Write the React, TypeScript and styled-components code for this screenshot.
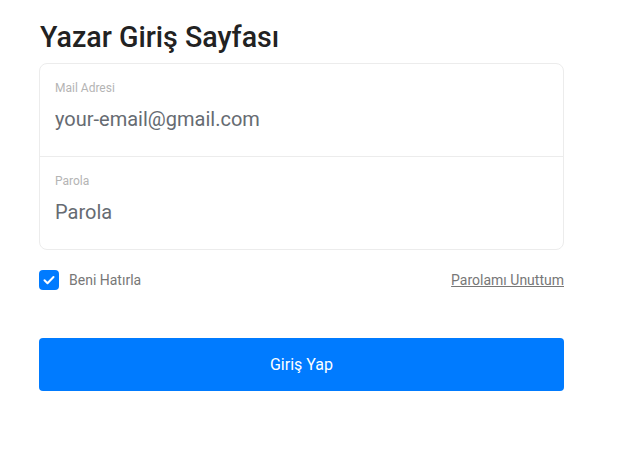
import { useState } from 'react';
import styled, { createGlobalStyle } from 'styled-components';

const GlobalStyle = createGlobalStyle`
  body {
    margin: 0;
    background: #fff;
    font-family: Roboto, "Liberation Sans", sans-serif;
  }
`;

const Page = styled.div`
  width: 525px;
  padding: 20px 0 0 39px;
`;

const Title = styled.h1`
  margin: 0 0 8px 1px;
  font-size: 28.6px;
  line-height: 35px;
  font-weight: 500;
  color: #222;
`;

const Card = styled.div`
  border: 1px solid #ececec;
  border-radius: 8px;
  overflow: hidden;
`;

const Field = styled.label<{ $last?: boolean }>`
  display: block;
  height: ${p => (p.$last ? 92 : 93)}px;
  padding: 17px 15px 0;
  box-sizing: border-box;
  border-bottom: ${p => (p.$last ? 'none' : '1px solid #ececec')};
`;

const FieldLabel = styled.div`
  font-size: 12px;
  line-height: 14px;
  color: #b4b4b4;
`;

const FieldInput = styled.input`
  display: block;
  width: 100%;
  margin-top: 11px;
  padding: 0;
  border: none;
  outline: none;
  background: none;
  font-family: inherit;
  font-size: 20px;
  line-height: 26px;
  color: #5f6368;

  &::placeholder {
    color: #666b72;
  }
`;

const OptionsRow = styled.div`
  display: flex;
  align-items: center;
  justify-content: space-between;
  margin-top: 20px;
`;

const Remember = styled.label`
  display: flex;
  align-items: center;
  gap: 10px;
  font-size: 14px;
  color: #777;
  cursor: pointer;
`;

const Check = styled.span<{ $on: boolean }>`
  display: inline-flex;
  align-items: center;
  justify-content: center;
  width: 20px;
  height: 20px;
  border-radius: 4px;
  background: ${p => (p.$on ? '#007bff' : '#fff')};
  border: ${p => (p.$on ? 'none' : '1px solid #ccc')};
  box-sizing: border-box;
`;

const Forgot = styled.a`
  font-size: 14px;
  color: #777;
  text-decoration: underline;
  cursor: pointer;
`;

const Submit = styled.button`
  display: block;
  width: 100%;
  height: 53px;
  margin-top: 48px;
  border: none;
  border-radius: 4px;
  background: #007bff;
  color: #fff;
  font-family: inherit;
  font-size: 16px;
  font-weight: 400;
  cursor: pointer;
`;

const App = () => {
  const [remember, setRemember] = useState(true);

  return (
    <>
      <GlobalStyle />
      <Page>
        <Title>Yazar Giriş Sayfası</Title>
        <Card>
          <Field>
            <FieldLabel>Mail Adresi</FieldLabel>
            <FieldInput type="email" placeholder="your-email@gmail.com" />
          </Field>
          <Field $last>
            <FieldLabel>Parola</FieldLabel>
            <FieldInput type="password" placeholder="Parola" />
          </Field>
        </Card>
        <OptionsRow>
          <Remember onClick={() => setRemember(r => !r)}>
            <Check $on={remember}>
              {remember && (
                <svg width="14" height="14" viewBox="0 0 14 14">
                  <path d="M2.5 7.2l3 3 6-6.2" fill="none" stroke="#fff" strokeWidth="2" strokeLinecap="round" strokeLinejoin="round" />
                </svg>
              )}
            </Check>
            Beni Hatırla
          </Remember>
          <Forgot>Parolamı Unuttum</Forgot>
        </OptionsRow>
        <Submit>Giriş Yap</Submit>
      </Page>
    </>
  );
};

export default App;
